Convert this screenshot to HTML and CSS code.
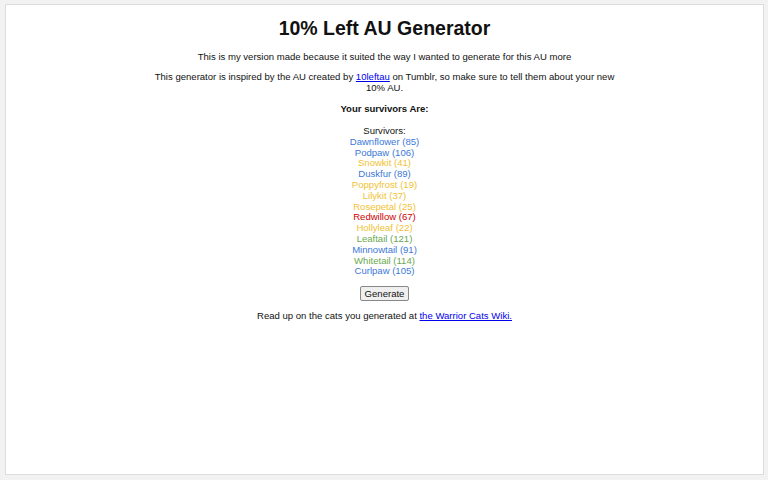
FILE: index.html
```html
<!DOCTYPE html>
<html>
<head>
  <meta charset="UTF-8">
  <title>10% Left AU Generator</title>
  <link rel="stylesheet" href="styles.css">
</head>
<body>
  <div class="page">
    <h1>10% Left AU Generator</h1>
    <p>This is my version made because it suited the way I wanted to generate for this AU more</p>
    <p class="intro">This generator is inspired by the AU created by <a href="#">10leftau</a> on Tumblr, so make sure to tell them about your new 10% AU.</p>
    <p class="heading">Your survivors Are:</p>

    <div class="survivors">
      <div>Survivors:</div>
      <div class="blue">Dawnflower (85)</div>
      <div class="blue">Podpaw (106)</div>
      <div class="yellow">Snowkit (41)</div>
      <div class="blue">Duskfur (89)</div>
      <div class="yellow">Poppyfrost (19)</div>
      <div class="yellow">Lilykit (37)</div>
      <div class="yellow">Rosepetal (25)</div>
      <div class="red">Redwillow (67)</div>
      <div class="yellow">Hollyleaf (22)</div>
      <div class="green">Leaftail (121)</div>
      <div class="blue">Minnowtail (91)</div>
      <div class="green">Whitetail (114)</div>
      <div class="blue">Curlpaw (105)</div>
    </div>

    <button class="generate">Generate</button>
    <p>Read up on the cats you generated at <a href="#">the Warrior Cats Wiki.</a></p>
  </div>
</body>
</html>
```

FILE: styles.css
```css
html, body {
  margin: 0;
  background: #f2f2f2;
}

body {
  padding: 4px 4px 5px 5px;
  font-family: "Liberation Sans", Arial, sans-serif;
  font-size: 9.55px;
  color: #111;
}

.page {
  background: white;
  border: 1px solid #dcdcdc;
  height: 471px;
  box-sizing: border-box;
  text-align: center;
  padding-top: 12px;
}

h1 {
  font-size: 19.5px;
  margin: 0 0 11px 0;
}

p {
  margin: 0 auto 9px auto;
  max-width: 464px;
  line-height: 11px;
}

.intro {
  margin-bottom: 10px;
}

.heading {
  font-weight: bold;
  margin-bottom: 12px;
}

a {
  color: #0000ee;
}

.survivors {
  line-height: 10.8px;
  margin-bottom: 9px;
}

.blue { color: #3c78d8; }
.yellow { color: #f1c232; }
.red { color: #cc0000; }
.green { color: #6aa84f; }

.generate {
  font-family: "Liberation Sans", Arial, sans-serif;
  font-size: 9.55px;
  padding: 1px 4px;
  margin-bottom: 9px;
  border: 1px solid #888;
  border-radius: 2px;
  background: #efefef;
  color: #111;
}
```
